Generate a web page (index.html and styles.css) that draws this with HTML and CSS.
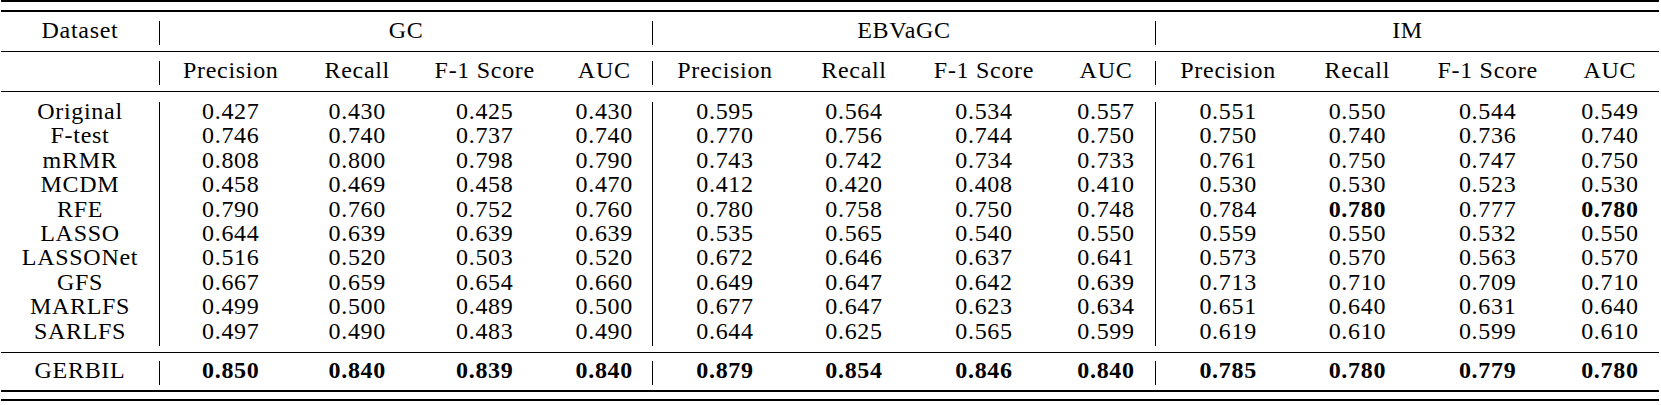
FILE: index.html
```html
<!DOCTYPE html>
<html>
<head>
<meta charset="utf-8">
<link rel="stylesheet" href="styles.css">
</head>
<body>
<div class="table">
  <div class="double"></div>
  <div class="sec head">
    <div class="grid">
      <div class="c">Dataset</div>
      <div class="c g span4">GC</div>
      <div class="c g span4">EBVaGC</div>
      <div class="c g span4">IM</div>
    </div>
  </div>
  <div class="sec head">
    <div class="grid">
      <div class="c"></div>
      <div class="c g">Precision</div><div class="c">Recall</div><div class="c">F-1 Score</div><div class="c">AUC</div>
      <div class="c g">Precision</div><div class="c">Recall</div><div class="c">F-1 Score</div><div class="c">AUC</div>
      <div class="c g">Precision</div><div class="c">Recall</div><div class="c">F-1 Score</div><div class="c">AUC</div>
    </div>
  </div>
  <div class="sec body">
    <div class="grid data">
      <div class="c">Original</div>
      <div class="c g">0.427</div><div class="c">0.430</div><div class="c">0.425</div><div class="c">0.430</div>
      <div class="c g">0.595</div><div class="c">0.564</div><div class="c">0.534</div><div class="c">0.557</div>
      <div class="c g">0.551</div><div class="c">0.550</div><div class="c">0.544</div><div class="c">0.549</div>

      <div class="c">F-test</div>
      <div class="c g">0.746</div><div class="c">0.740</div><div class="c">0.737</div><div class="c">0.740</div>
      <div class="c g">0.770</div><div class="c">0.756</div><div class="c">0.744</div><div class="c">0.750</div>
      <div class="c g">0.750</div><div class="c">0.740</div><div class="c">0.736</div><div class="c">0.740</div>

      <div class="c">mRMR</div>
      <div class="c g">0.808</div><div class="c">0.800</div><div class="c">0.798</div><div class="c">0.790</div>
      <div class="c g">0.743</div><div class="c">0.742</div><div class="c">0.734</div><div class="c">0.733</div>
      <div class="c g">0.761</div><div class="c">0.750</div><div class="c">0.747</div><div class="c">0.750</div>

      <div class="c">MCDM</div>
      <div class="c g">0.458</div><div class="c">0.469</div><div class="c">0.458</div><div class="c">0.470</div>
      <div class="c g">0.412</div><div class="c">0.420</div><div class="c">0.408</div><div class="c">0.410</div>
      <div class="c g">0.530</div><div class="c">0.530</div><div class="c">0.523</div><div class="c">0.530</div>

      <div class="c">RFE</div>
      <div class="c g">0.790</div><div class="c">0.760</div><div class="c">0.752</div><div class="c">0.760</div>
      <div class="c g">0.780</div><div class="c">0.758</div><div class="c">0.750</div><div class="c">0.748</div>
      <div class="c g">0.784</div><div class="c b">0.780</div><div class="c">0.777</div><div class="c b">0.780</div>

      <div class="c">LASSO</div>
      <div class="c g">0.644</div><div class="c">0.639</div><div class="c">0.639</div><div class="c">0.639</div>
      <div class="c g">0.535</div><div class="c">0.565</div><div class="c">0.540</div><div class="c">0.550</div>
      <div class="c g">0.559</div><div class="c">0.550</div><div class="c">0.532</div><div class="c">0.550</div>

      <div class="c">LASSONet</div>
      <div class="c g">0.516</div><div class="c">0.520</div><div class="c">0.503</div><div class="c">0.520</div>
      <div class="c g">0.672</div><div class="c">0.646</div><div class="c">0.637</div><div class="c">0.641</div>
      <div class="c g">0.573</div><div class="c">0.570</div><div class="c">0.563</div><div class="c">0.570</div>

      <div class="c">GFS</div>
      <div class="c g">0.667</div><div class="c">0.659</div><div class="c">0.654</div><div class="c">0.660</div>
      <div class="c g">0.649</div><div class="c">0.647</div><div class="c">0.642</div><div class="c">0.639</div>
      <div class="c g">0.713</div><div class="c">0.710</div><div class="c">0.709</div><div class="c">0.710</div>

      <div class="c">MARLFS</div>
      <div class="c g">0.499</div><div class="c">0.500</div><div class="c">0.489</div><div class="c">0.500</div>
      <div class="c g">0.677</div><div class="c">0.647</div><div class="c">0.623</div><div class="c">0.634</div>
      <div class="c g">0.651</div><div class="c">0.640</div><div class="c">0.631</div><div class="c">0.640</div>

      <div class="c">SARLFS</div>
      <div class="c g">0.497</div><div class="c">0.490</div><div class="c">0.483</div><div class="c">0.490</div>
      <div class="c g">0.644</div><div class="c">0.625</div><div class="c">0.565</div><div class="c">0.599</div>
      <div class="c g">0.619</div><div class="c">0.610</div><div class="c">0.599</div><div class="c">0.610</div>
    </div>
  </div>
  <div class="sec last">
    <div class="grid">
      <div class="c">GERBIL</div>
      <div class="c g b">0.850</div><div class="c b">0.840</div><div class="c b">0.839</div><div class="c b">0.840</div>
      <div class="c g b">0.879</div><div class="c b">0.854</div><div class="c b">0.846</div><div class="c b">0.840</div>
      <div class="c g b">0.785</div><div class="c b">0.780</div><div class="c b">0.779</div><div class="c b">0.780</div>
    </div>
  </div>
  <div class="double bottom"></div>
</div>
</body>
</html>
```

FILE: styles.css
```css
html, body {
  margin: 0;
  padding: 0;
  background: #ffffff;
}

body {
  font-family: "Liberation Serif", "Times New Roman", serif;
  font-size: 24px;
  color: #000000;
}

.table {
  margin-left: 1px;
  width: 1658px;
}

.double {
  border-top: 2px solid #000000;
  border-bottom: 2px solid #000000;
  height: 8px;
}

.double.bottom {
  height: 7px;
}

.sec {
  border-bottom: 1px solid #000000;
  padding: 9px 0 6px;
}

.sec.body {
  padding: 10px 0 6px;
}

.sec.last {
  border-bottom: none;
  padding: 8px 0 5px;
}

.grid {
  display: grid;
  grid-template-columns: 158px 142.5px 111.5px 143.5px 95.5px 145px 114px 146px 98px 145.25px 114.25px 146.25px 98.25px;
  grid-auto-rows: 24px;
}

.grid.data {
  grid-auto-rows: 24.4px;
}

.c {
  text-align: center;
  line-height: 18px;
  letter-spacing: 0.7px;
  white-space: nowrap;
  box-sizing: border-box;
}

.g {
  border-left: 1px solid #000000;
}

.span4 {
  grid-column: span 4;
}

.b {
  font-weight: bold;
}
```
